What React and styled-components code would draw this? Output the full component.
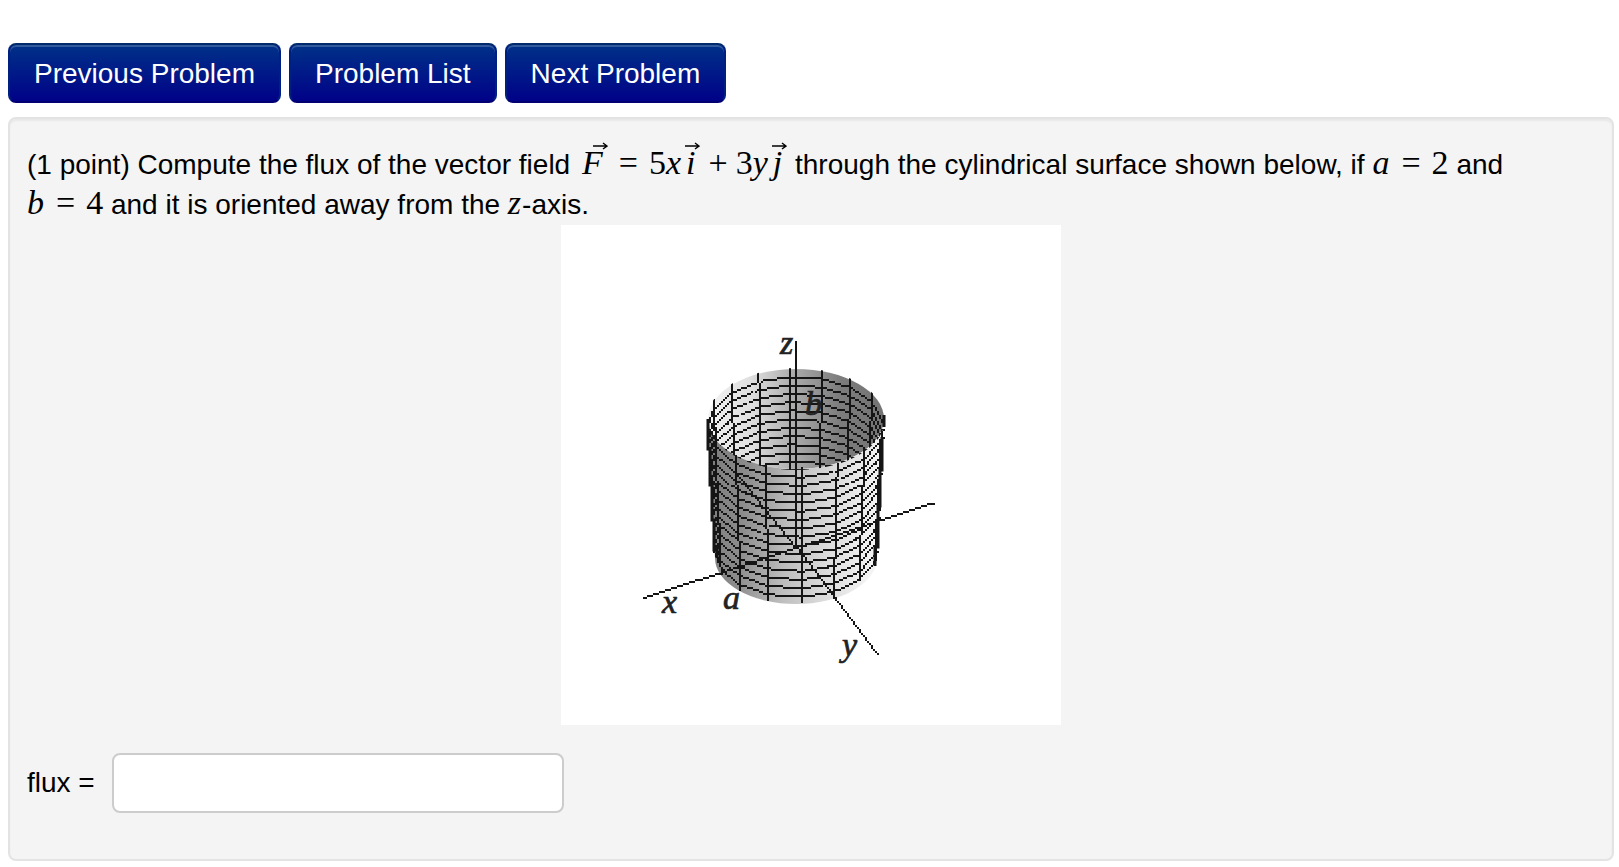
import React, { useState } from "react";
import styled, { createGlobalStyle } from "styled-components";

const GlobalStyle = createGlobalStyle`
  * {
    box-sizing: border-box;
  }

  body {
    margin: 0;
    background: #fff;
    color: #000;
    font-family: "Liberation Sans", Arial, sans-serif;
    font-size: 28px;
    line-height: 40px;
  }
`;

const Page = styled.main`
  padding: 43px 5px 6px 8px;
`;

const Nav = styled.nav`
  display: flex;
  flex-wrap: wrap;
  gap: 8px;
  margin-bottom: 14px;
`;

const NavButton = styled.button`
  height: 60px;
  padding: 2px 24px 0;
  border: 2px solid;
  border-color: #002a6b #002080 #000072;
  border-radius: 8px;
  background: linear-gradient(to bottom, #003388, #000088) border-box;
  box-shadow: inset 0 2px 0 rgba(255, 255, 255, 0.2);
  color: #fff;
  font: inherit;
  cursor: pointer;
`;

const Panel = styled.section`
  padding: 26px 17px 46px;
  border: 2px solid #e3e3e3;
  border-radius: 8px;
  background: #f4f4f4;
  box-shadow: inset 0 2px 2px rgba(0, 0, 0, 0.05);
`;

const Statement = styled.p`
  margin: 0;
  padding-right: 40px;
`;

const MathText = styled.span`
  font-family: "Liberation Serif", "Times New Roman", serif;
  font-size: 34px;
  line-height: 1;
  white-space: nowrap;
`;

const Variable = styled.i`
  padding-right: 1px;
`;

const Operator = styled.span`
  margin: 0 ${(props) => (props.$tight ? "8px" : "11px")};
`;

const VectorBox = styled.span`
  position: relative;
  display: inline-block;
  padding: 0 4px;
`;

const Arrow = styled.svg`
  position: absolute;
  top: -4px;
  right: 0;
  width: 15px;
  height: 8px;
`;

const Figure = styled.figure`
  display: flex;
  justify-content: center;
  margin: 0;
`;

const Drawing = styled.svg`
  width: 500px;
  max-width: 100%;
  height: auto;
  background: #fff;
`;

const AxisLabel = styled.text`
  font-family: "Liberation Serif", "Times New Roman", serif;
  font-size: 34px;
  font-style: italic;
  fill: #222;
  stroke: #222;
  stroke-width: ${(props) => (props.$heavy ? 0.7 : 0)};
`;

const Answer = styled.form`
  display: flex;
  align-items: center;
  gap: 17px;
  margin-top: 28px;
`;

const AnswerInput = styled.input`
  width: 452px;
  max-width: 100%;
  height: 60px;
  padding: 8px 12px;
  border: 2px solid #ccc;
  border-radius: 8px;
  background: #fff;
  font: inherit;
`;

// Cylinder seen from slightly above, t goes from the top rim (0) to the base (1)
const CX = 235;
const ring = (t) => ({ cy: 194 + 139 * t, rx: 88 - 7 * t, ry: 50 - 4 * t });

const point = (t, deg, side) => {
  const { cy, rx, ry } = ring(t);
  const a = (deg * Math.PI) / 180;
  return [CX + rx * Math.sin(a), cy + side * ry * Math.cos(a)];
};

// Draws a polyline as square cells on a coarse grid, like a low resolution plot
const CELL = 2;

const pixelPath = (points) => {
  const cells = new Set();
  for (let i = 1; i < points.length; i++) {
    const [x0, y0] = points[i - 1].map((v) => v / CELL);
    const [x1, y1] = points[i].map((v) => v / CELL);
    const steps = Math.max(1, Math.round(Math.max(Math.abs(x1 - x0), Math.abs(y1 - y0))));
    for (let s = 0; s <= steps; s++) {
      const x = Math.floor(x0 + ((x1 - x0) * s) / steps);
      const y = Math.floor(y0 + ((y1 - y0) * s) / steps);
      cells.add(`M${x * CELL} ${y * CELL}h${CELL}v${CELL}h${-CELL}z`);
    }
  }
  return [...cells].join("");
};

const frontAngles = [-88, -67, -43, -20, 4, 28, 51, 76, 88];
const backAngles = [-88, -69, -47, -25, -4, 17, 38, 60, 86];

const frontLines = [
  ...Array.from({ length: 15 }, (_, i) => frontAngles.map((a) => point((i + 1) / 15.8, a, 1))),
  ...frontAngles.slice(1, -1).map((a) => [point(0, a, 1), point(a > 40 ? 0.95 : 0.99, a, 1)]),
].map(pixelPath);

const backLines = [
  ...Array.from({ length: 15 }, (_, i) => backAngles.map((a) => point(0.055 + i * 0.059, a, -1))),
  ...backAngles.slice(1, -1).map((a) => [point(-0.01, a, -1), point(1, a, -1)]),
].map(pixelPath);

const axes = [
  [[235, 116], [235, 322]],
  [[82, 373], [372, 278]],
  [[176, 248], [235, 322], [316, 429]],
].map(pixelPath);

const Vector = ({ children }) => (
  <VectorBox>
    <Variable>{children}</Variable>
    <Arrow viewBox="0 0 15 8" fill="none" stroke="#000" strokeWidth="1.4">
      <path d="M0 4H14M10 1L14 4L10 7" />
    </Arrow>
  </VectorBox>
);

const CylinderFigure = () => (
  <Figure>
    <Drawing viewBox="0 0 500 500" role="img" aria-label="Cylinder of radius a and height b around the z-axis">
      <defs>
        <linearGradient id="inner">
          <stop offset="0" stopColor="#f4f4f4" />
          <stop offset="0.25" stopColor="#dedede" />
          <stop offset="0.5" stopColor="#a8a8a8" />
          <stop offset="0.75" stopColor="#7c7c7c" />
          <stop offset="1" stopColor="#747474" />
        </linearGradient>
        <linearGradient id="outer" x1="0" y1="0" x2="1" y2="0.1">
          <stop offset="0" stopColor="#7a7a7a" />
          <stop offset="0.25" stopColor="#8c8c8c" />
          <stop offset="0.5" stopColor="#bcbcbc" />
          <stop offset="0.75" stopColor="#dcdcdc" />
          <stop offset="1" stopColor="#f4f4f4" />
        </linearGradient>
        <clipPath id="mouth">
          <ellipse cx={CX} cy="194" rx="89" ry="51" />
        </clipPath>
      </defs>

      <ellipse cx={CX} cy="194" rx="88" ry="50" fill="url(#inner)" />
      <path d="M147 194A88 50 0 0 0 323 194L316 333A81 46 0 0 1 154 333Z" fill="url(#outer)" />

      <g fill="#151515">
        <g clipPath="url(#mouth)">
          {backLines.map((d, i) => (
            <path key={i} d={d} />
          ))}
        </g>
        {frontLines.map((d, i) => (
          <path key={i} d={d} />
        ))}
        {axes.map((d, i) => (
          <path key={i} d={d} />
        ))}
      </g>
      <path
        d="M147 194V224H149V260H151V295H153V325H156V333M323 190V202M321 212V245H319V281H317V322H314V341"
        fill="none"
        stroke="#151515"
        strokeWidth="3"
      />

      <AxisLabel x="219" y="129" $heavy>z</AxisLabel>
      <AxisLabel x="244" y="190" $heavy>b</AxisLabel>
      <AxisLabel x="101" y="388" $heavy>x</AxisLabel>
      <AxisLabel x="162" y="384" $heavy>a</AxisLabel>
      <AxisLabel x="281" y="431" $heavy>y</AxisLabel>
    </Drawing>
  </Figure>
);

export default function App() {
  const [flux, setFlux] = useState("");

  return (
    <>
      <GlobalStyle />
      <Page>
        <Nav>
          <NavButton type="button">Previous Problem</NavButton>
          <NavButton type="button">Problem List</NavButton>
          <NavButton type="button">Next Problem</NavButton>
        </Nav>
        <Panel>
          <Statement>
            (1 point) Compute the flux of the vector field{" "}
            <MathText>
              <Vector>F</Vector>
              <Operator>=</Operator>5<Variable>x</Variable>
              <Vector>i</Vector>
              <Operator $tight>+</Operator>3<Variable>y</Variable>
              <Vector>j</Vector>
            </MathText>{" "}
            through the cylindrical surface shown below, if{" "}
            <MathText>
              <Variable>a</Variable>
              <Operator>=</Operator>2
            </MathText>{" "}
            and{" "}
            <MathText>
              <Variable>b</Variable>
              <Operator>=</Operator>4
            </MathText>{" "}
            and it is oriented away from the{" "}
            <MathText>
              <Variable>z</Variable>
            </MathText>
            -axis.
          </Statement>
          <CylinderFigure />
          <Answer onSubmit={(e) => e.preventDefault()}>
            <label htmlFor="flux">flux =</label>
            <AnswerInput id="flux" type="text" value={flux} onChange={(e) => setFlux(e.target.value)} />
          </Answer>
        </Panel>
      </Page>
    </>
  );
}
